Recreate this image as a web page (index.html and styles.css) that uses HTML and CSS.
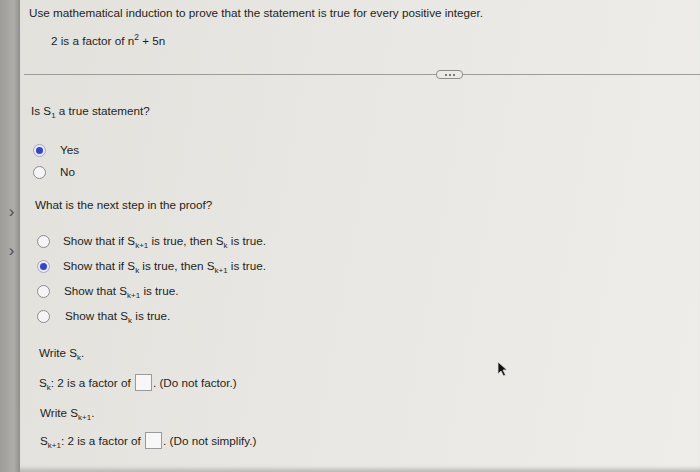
FILE: index.html
```html
<!DOCTYPE html>
<html>
<head>
<meta charset="utf-8">
<link rel="stylesheet" href="styles.css">
</head>
<body>
<div class="page">
  <div class="strip">
    <span class="arrow a1">&#8250;</span>
    <span class="arrow a2">&#8250;</span>
  </div>
  <div class="content">
    <div class="title">Use mathematical induction to prove that the statement is true for every positive integer.</div>
    <div class="statement">2 is a factor of n<sup>2</sup> + 5n</div>
    <div class="divider">
      <div class="line"></div>
      <div class="pill"><span></span><span></span><span></span></div>
      <div class="line long"></div>
    </div>
    <div class="q1">Is S<sub>1</sub> a true statement?</div>
    <div class="opts opts1">
      <div class="opt"><span class="radio on"></span><span class="lbl">Yes</span></div>
      <div class="opt"><span class="radio"></span><span class="lbl">No</span></div>
    </div>
    <div class="q2">What is the next step in the proof?</div>
    <div class="opts opts2">
      <div class="opt"><span class="radio"></span><span class="lbl">Show that if S<sub>k+1</sub> is true, then S<sub>k</sub> is true.</span></div>
      <div class="opt"><span class="radio on"></span><span class="lbl">Show that if S<sub>k</sub> is true, then S<sub>k+1</sub> is true.</span></div>
      <div class="opt o3"><span class="radio"></span><span class="lbl">Show that S<sub>k+1</sub> is true.</span></div>
      <div class="opt o4"><span class="radio"></span><span class="lbl">Show that S<sub>k</sub> is true.</span></div>
    </div>
    <div class="w1">Write S<sub>k</sub>.</div>
    <div class="fill f1">S<sub>k</sub>: 2 is a factor of <span class="box"></span>. (Do not factor.)</div>
    <div class="w2">Write S<sub>k+1</sub>.</div>
    <div class="fill f2">S<sub>k+1</sub>: 2 is a factor of <span class="box"></span>. (Do not simplify.)</div>
    <svg class="cursor" width="12" height="16" viewBox="0 0 12 16"><path d="M1 1 L1 13 L4 10 L6.5 15 L8.5 14 L6 9 L10 9 Z" fill="#111" stroke="#ddd" stroke-width="0.8"/></svg>
  </div>
</div>
</body>
</html>
```

FILE: styles.css
```css
html, body {
  margin: 0;
  padding: 0;
}
body {
  font-family: "Liberation Sans", Arial, sans-serif;
  font-size: 11.7px;
  color: #1f1f22;
  width: 700px;
  height: 472px;
  overflow: hidden;
}
.page {
  display: flex;
  height: 472px;
  width: 700px;
}
.strip {
  width: 20px;
  flex: none;
  background: linear-gradient(to right, #9d9c98 0%, #aeada9 70%, #8f8e8a 100%);
  display: flex;
  flex-direction: column;
  align-items: center;
  padding-top: 203px;
  box-sizing: border-box;
}
.arrow {
  color: #4e4e50;
  font-size: 17px;
  line-height: 18px;
  display: block;
  margin-left: 3px;
}
.a2 {
  margin-top: 21px;
}
.content {
  flex: 1;
  min-width: 0;
  overflow: hidden;
  position: relative;
  background: linear-gradient(100deg, #e3e1dc 0%, #e8e7e3 45%, #eeedea 100%);
  padding-top: 5px;
  box-shadow: inset 0 -6px 4px -3px #b8b7b3;
}
.content > div {
  line-height: 16px;
  white-space: nowrap;
}
sub {
  font-size: 8px;
  vertical-align: -3px;
  line-height: 0;
}
sup {
  font-size: 8.5px;
  vertical-align: 5px;
  line-height: 0;
}
.title {
  margin-left: 9px;
}
.statement {
  margin-left: 31px;
  margin-top: 12px;
}
.divider {
  margin-top: 21px;
  margin-left: 4px;
  display: flex;
  align-items: center;
  height: 9px;
}
.divider .line {
  height: 1px;
  background: #9d9c98;
  width: 412px;
}
.divider .line.long {
  flex: 1;
}
.pill {
  width: 25px;
  height: 7px;
  border: 1px solid #8e8d8a;
  border-radius: 4px;
  display: flex;
  justify-content: center;
  align-items: center;
  gap: 2px;
  background: #eceae6;
}
.pill span {
  width: 2px;
  height: 2px;
  border-radius: 50%;
  background: #555;
}
.q1 {
  margin-top: 24px;
  margin-left: 11px;
}
.opts {
  display: flex;
  flex-direction: column;
}
.opts1 {
  margin-top: 23px;
  margin-left: 13px;
  gap: 6px;
}
.opts2 {
  margin-top: 20px;
  margin-left: 17px;
  gap: 9px;
}
.opt {
  display: flex;
  align-items: center;
  height: 16px;
}
.radio {
  width: 11px;
  height: 11px;
  border: 1.5px solid #8b8b93;
  border-radius: 50%;
  background: #f5f5f6;
  display: flex;
  align-items: center;
  justify-content: center;
  flex: none;
}
.radio.on {
  border-color: #a6a7c4;
  background: #e9eaf6;
}
.radio.on::after {
  content: "";
  width: 7px;
  height: 7px;
  border-radius: 50%;
  background: #3445c6;
}
.opts1 .lbl {
  margin-left: 14px;
}
.opts2 .lbl {
  margin-left: 13px;
}
.o3 .lbl {
  margin-left: 14px;
}
.o4 .lbl {
  margin-left: 15px;
}
.q2 {
  margin-top: 17px;
  margin-left: 15px;
}
.w1 {
  margin-top: 21px;
  margin-left: 19px;
}
.fill {
  height: 18px;
  line-height: 18px;
}
.f1 {
  margin-top: 14px;
  margin-left: 19px;
}
.w2 {
  margin-top: 12px;
  margin-left: 20px;
}
.f2 {
  margin-top: 12px;
  margin-left: 20px;
}
.box {
  display: inline-block;
  width: 15px;
  height: 15px;
  border: 1px solid #9a9a9a;
  background: #f7f7f7;
  margin: 0 1px;
  vertical-align: middle;
  position: relative;
  top: -1px;
}
.cursor {
  position: absolute;
  left: 477px;
  top: 361px;
}
```
